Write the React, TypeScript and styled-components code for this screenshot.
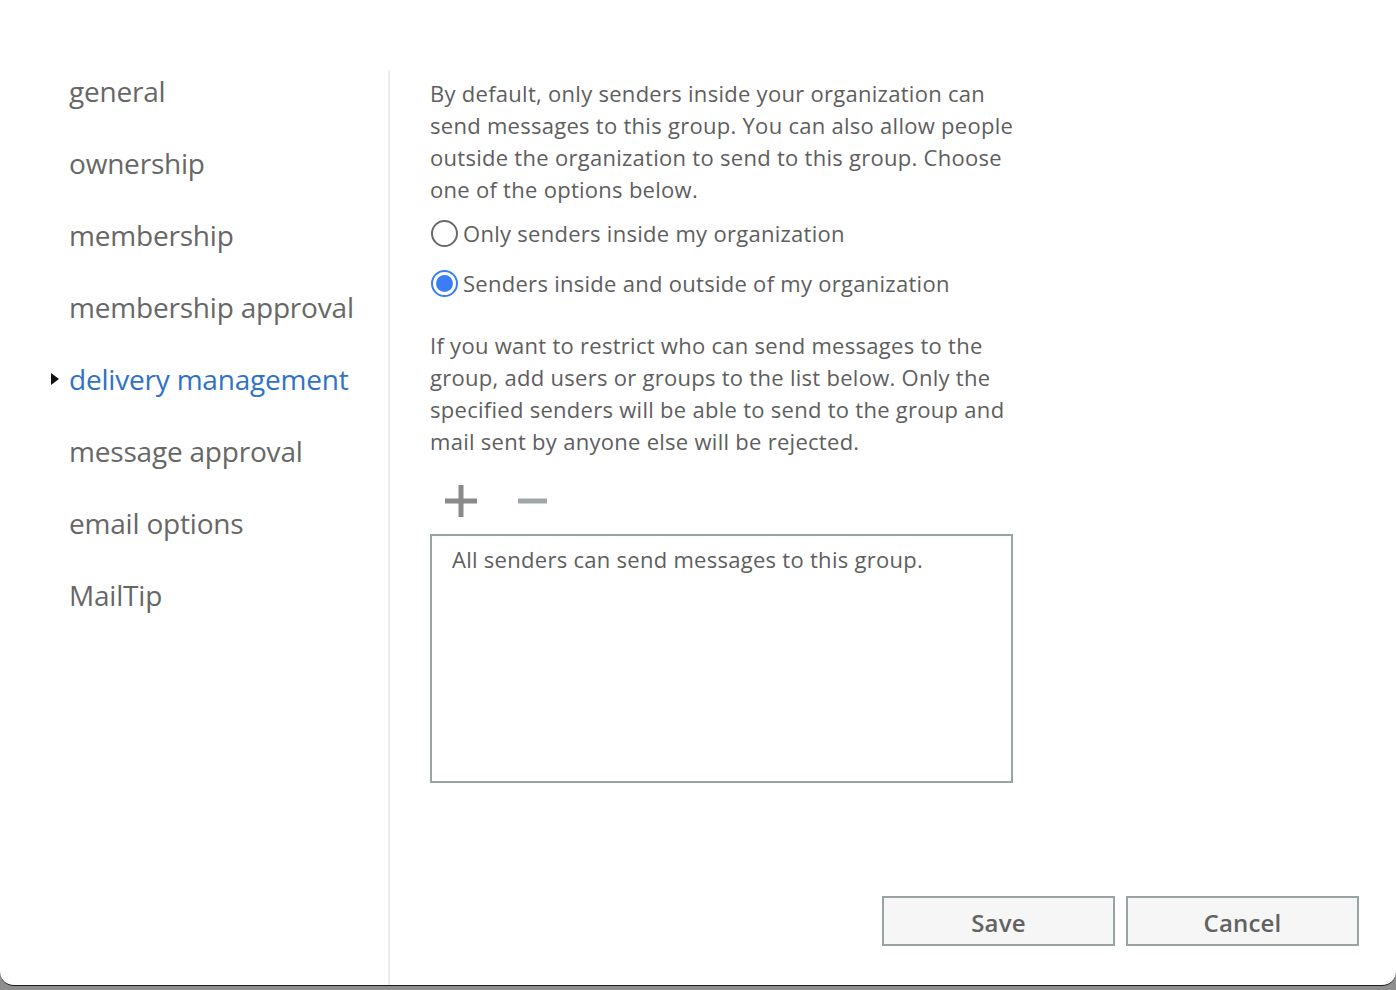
import React from "react";
import styled, { createGlobalStyle } from "styled-components";

const Global = createGlobalStyle`
  html, body { margin: 0; padding: 0; }
  body {
    background: #8e8e8e;
    font-family: "Open Sans", "Noto Sans", sans-serif;
    overflow: hidden;
  }
`;

const Window = styled.div`
  width: 1396px;
  height: 986px;
  background: #ffffff;
  border-bottom: 1px solid #1c1c1c;
  border-radius: 0 0 14px 14px;
  box-sizing: border-box;
  padding-top: 70px;
  display: flex;
`;

const Nav = styled.nav`
  width: 388px;
  flex: none;
  border-right: 2px solid #ececec;
  display: flex;
  flex-direction: column;
  gap: 28px;
`;

const NavItem = styled.div<{ $active?: boolean }>`
  position: relative;
  padding-left: 69px;
  height: 44px;
  line-height: 42px;
  font-size: 28px;
  letter-spacing: -0.2px;
  color: ${(p) => (p.$active ? "#2f72c8" : "#676767")};
  white-space: nowrap;
  ${(p) =>
    p.$active
      ? `&::before {
    content: "";
    position: absolute;
    left: 51px;
    top: 15px;
    border-left: 8px solid #111;
    border-top: 6.5px solid transparent;
    border-bottom: 6.5px solid transparent;
  }`
      : ""}
`;

const Content = styled.main`
  flex: 1;
  padding: 7px 37px 0 40px;
  display: flex;
  flex-direction: column;
  color: #5e5e5e;
  font-size: 22px;
  letter-spacing: 0.28px;
`;

const Para = styled.p<{ $top?: number }>`
  margin: ${(p) => p.$top ?? 0}px 0 0 0;
  line-height: 32px;
  white-space: nowrap;
`;

const RadioRow = styled.label<{ $top: number }>`
  display: flex;
  align-items: center;
  height: 40px;
  margin-top: ${(p) => p.$top}px;
  gap: 5px;
  white-space: nowrap;
  line-height: 40px;
`;

const RadioCircle = styled.span<{ $checked?: boolean }>`
  width: 27px;
  height: 27px;
  box-sizing: border-box;
  border-radius: 50%;
  margin-left: 1px;
  border: 2px solid ${(p) => (p.$checked ? "#3a7df4" : "#6a6a6a")};
  display: flex;
  align-items: center;
  justify-content: center;
  background: #fff;
  &::after {
    content: "";
    display: ${(p) => (p.$checked ? "block" : "none")};
    width: 17px;
    height: 17px;
    border-radius: 50%;
    background: #3a7df4;
  }
`;

const Toolbar = styled.div`
  display: flex;
  align-items: center;
  height: 40px;
  margin-top: 24px;
  padding-left: 15px;
  gap: 41px;
`;

const IconBtn = styled.span`
  display: flex;
  height: 32px;
`;

const ListBox = styled.div`
  margin-top: 13px;
  width: 583px;
  height: 249px;
  box-sizing: border-box;
  border: 2px solid #9aa4a5;
  padding: 7px 20px;
  line-height: 32px;
  white-space: nowrap;
`;

const Footer = styled.div`
  margin-top: 113px;
  display: flex;
  justify-content: flex-end;
  gap: 11px;
`;

const Button = styled.button`
  width: 233px;
  height: 50px;
  box-sizing: border-box;
  border: 2px solid #9aa3a4;
  background: #f6f6f6;
  color: #626262;
  font-family: "Open Sans", "Noto Sans", sans-serif;
  font-size: 24px;
  font-weight: 600;
  letter-spacing: 0.2px;
  padding: 0;
  padding-top: 2px;
  cursor: pointer;
`;

const PlusIcon = () => (
  <svg width="32" height="32" viewBox="0 0 32 32">
    <rect x="0" y="13.5" width="32" height="5" fill="#8a8a8a" />
    <rect x="13.5" y="0" width="5" height="32" fill="#8a8a8a" />
  </svg>
);

const MinusIcon = () => (
  <svg width="29" height="32" viewBox="0 0 29 32">
    <rect x="0" y="13.5" width="29" height="5" fill="#a0a7a8" />
  </svg>
);

const navItems = [
  "general",
  "ownership",
  "membership",
  "membership approval",
  "delivery management",
  "message approval",
  "email options",
  "MailTip",
];

export default function App() {
  return (
    <>
      <Global />
      <Window>
        <Nav>
          {navItems.map((n) => (
            <NavItem key={n} $active={n === "delivery management"}>
              {n}
            </NavItem>
          ))}
        </Nav>
        <Content>
          <Para>
            By default, only senders inside your organization can
            <br />
            send messages to this group. You can also allow people
            <br />
            outside the organization to send to this group. Choose
            <br />
            one of the options below.
          </Para>
          <RadioRow $top={8}>
            <RadioCircle />
            Only senders inside my organization
          </RadioRow>
          <RadioRow $top={10}>
            <RadioCircle $checked />
            Senders inside and outside of my organization
          </RadioRow>
          <Para $top={26}>
            If you want to restrict who can send messages to the
            <br />
            group, add users or groups to the list below. Only the
            <br />
            specified senders will be able to send to the group and
            <br />
            mail sent by anyone else will be rejected.
          </Para>
          <Toolbar>
            <IconBtn>
              <PlusIcon />
            </IconBtn>
            <IconBtn>
              <MinusIcon />
            </IconBtn>
          </Toolbar>
          <ListBox>All senders can send messages to this group.</ListBox>
          <Footer>
            <Button>Save</Button>
            <Button>Cancel</Button>
          </Footer>
        </Content>
      </Window>
    </>
  );
}
